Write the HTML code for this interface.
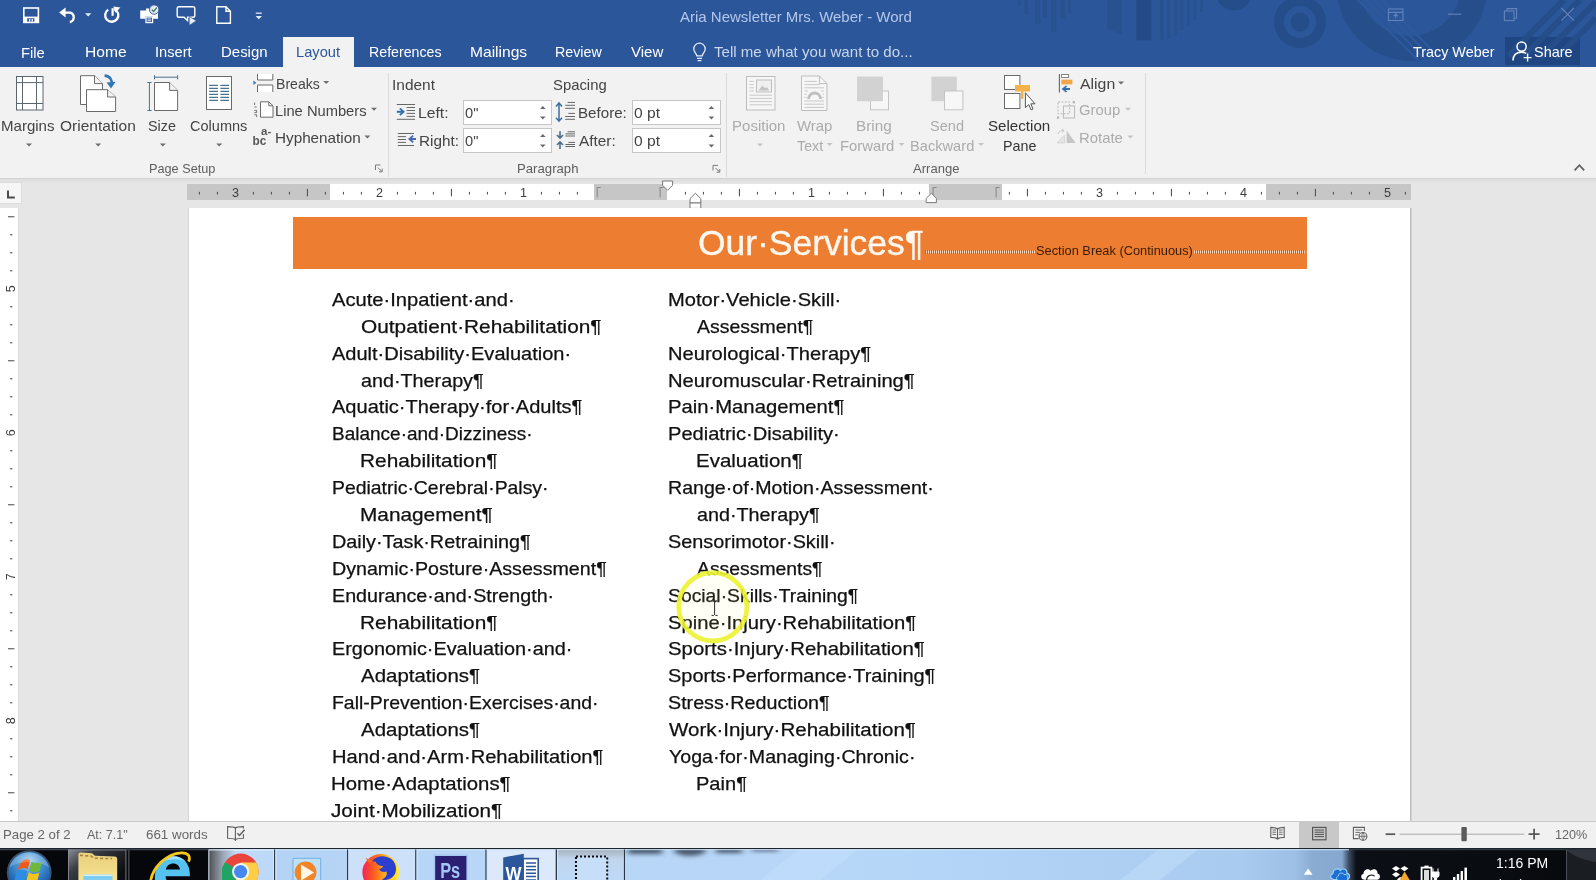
<!DOCTYPE html>
<html lang="en"><head><meta charset="utf-8"><title>Aria Newsletter Mrs. Weber - Word</title>
<style>
html,body{margin:0;padding:0;background:#e6e6e6;}
body{width:1596px;height:880px;overflow:hidden;font-family:"Liberation Sans",sans-serif;}
#root{position:relative;width:1596px;height:880px;overflow:hidden;background:#e6e6e6;}
.a{position:absolute;}
.t{position:absolute;white-space:pre;line-height:1;transform-origin:0 0;font-family:"Liberation Sans",sans-serif;}
svg{position:absolute;overflow:visible;will-change:transform;}

</style></head>
<body><div id="root">
<!-- bg.html -->
<div class="a" style="left:0;top:0;width:1596px;height:67px;background:#2b579a"></div>
<div class="a" style="left:0;top:67px;width:1596px;height:111px;background:#f2f2f2"></div>
<div class="a" style="left:0;top:178px;width:1596px;height:1px;background:#d2d2d2"></div>
<div class="a" style="left:0;top:179px;width:1596px;height:3px;background:#e0e0e0"></div>
<div class="a" style="left:283px;top:37px;width:71px;height:31px;background:#f2f2f2"></div>
<div class="a" style="left:1505px;top:37px;width:74.5px;height:28px;background:#1f4680"></div>

<!-- header.html -->
<svg style="left:0;top:0" width="1596" height="67" viewBox="0 0 1596 67">
<defs><clipPath id="hc"><rect x="0" y="0" width="1596" height="67"/></clipPath>
<clipPath id="ringc"><circle cx="1412" cy="-15" r="76"/></clipPath></defs>
<g clip-path="url(#hc)" fill="#244b87">
<!-- hanging stripes -->
<g fill="#28518f">
<rect x="1018" y="0" width="2.8" height="6"/><rect x="1024.4" y="0" width="3.6" height="15"/><rect x="1034.8" y="0" width="5.6" height="24"/>
<rect x="1043" y="0" width="4" height="18"/><rect x="1050.8" y="0" width="5.6" height="32"/><rect x="1060" y="0" width="5" height="19"/><rect x="1068" y="0" width="3" height="14"/>
<path d="M1107 0 H1122 V35 L1107 28 Z"/>
<rect x="1159.8" y="0" width="3.7" height="40"/><rect x="1167.3" y="0" width="2.8" height="38"/><rect x="1174" y="0" width="3.6" height="36"/>
<rect x="1180.5" y="0" width="2.8" height="31"/><rect x="1187" y="0" width="2.8" height="27"/><rect x="1193.6" y="0" width="2.8" height="20"/><rect x="1200" y="0" width="3" height="12"/>
</g>
<rect x="1136.3" y="0" width="15" height="40.4" fill="#244b88"/>
<!-- half disc -->
<circle cx="1234" cy="-8" r="18.4" fill="#254d89"/>
<!-- target ring -->
<circle cx="1300" cy="22" r="26" fill="#254d8a"/>
<circle cx="1300" cy="22" r="16" fill="#2b579a"/>
<circle cx="1300" cy="22" r="9.5" fill="#254d8a"/>
<!-- big ring -->
<circle cx="1412" cy="-15" r="76" fill="#264e8b"/>
<circle cx="1410" cy="-15" r="51" fill="#2b579a"/>
<g clip-path="url(#ringc)" stroke="#2d5a9e" stroke-width="2.2" fill="none">
<path d="M1348 -10 L1420 62"/><path d="M1356 -10 L1428 62"/><path d="M1364 -10 L1436 62"/><path d="M1372 -10 L1444 62"/>
</g>
<!-- right striped disc -->
<g stroke="#254d8a" stroke-width="6" fill="none">
<path d="M1596 2 L1540 58"/><path d="M1596 18 L1556 58"/><path d="M1580 0 L1524 56"/><path d="M1564 0 L1508 56"/>
</g>
</g>
<!-- QAT icons -->
<g fill="none" stroke="#ffffff" stroke-width="1.6">
<!-- save -->
<rect x="23.8" y="8" width="14.6" height="14.4"/>
<path d="M24 16.6 H38.2 V22 H24 Z" fill="#fff" stroke="none"/>
<rect x="27.2" y="18.3" width="7.2" height="3.3" fill="#2b579a" stroke="none"/>
<rect x="29" y="19" width="1.3" height="2.6" fill="#fff" stroke="none"/><rect x="31.6" y="19" width="1.3" height="2.6" fill="#fff" stroke="none"/>
<!-- undo -->
<path d="M62 12.6 H70.5 A5 5 0 0 1 70.5 22 H69.8" stroke-width="2.3"/>
<path d="M59.2 12.6 L65.6 7.6 V17.6 Z" fill="#fff" stroke="none"/>
<path d="M85 13.3 H91.4 L88.2 16.4 Z" fill="#e6ecf6" stroke="none"/>
<!-- redo -->
<path d="M114.6 9.2 A6.6 6.6 0 1 1 108.2 9.6" stroke-width="2.3"/>
<path d="M113.4 6.4 L120.4 7.6 L115.2 12.8 Z" fill="#fff" stroke="none"/>
<path d="M112.6 8.2 V15.8" stroke-width="2.2"/>
<!-- printer + check -->
<path d="M140.2 10.4 H146 V8.4 H149.5 V11 H158 V18.8 H153 V16.4 H145.4 V18.8 H140.2 Z" fill="#fff" stroke="none"/>
<rect x="146" y="17" width="6.6" height="5.6" fill="#2b579a" stroke="#fff" stroke-width="1.2"/>
<path d="M147.4 19 H151.2 M147.4 20.8 H151.2" stroke-width="0.9"/>
<circle cx="154.2" cy="9.6" r="4.7" fill="#dfe8f5" stroke="#2b579a" stroke-width="0.9"/>
<path d="M151.8 9.6 L153.6 11.5 L156.8 7.6" stroke="#3e7a52" stroke-width="1.3"/>
<!-- comment play -->
<path d="M179 6.8 H193 A1.8 1.8 0 0 1 194.8 8.6 V15.4 A1.8 1.8 0 0 1 193 17.2 H187.6 V20.6 L184 17.2 H179 A1.8 1.8 0 0 1 177.2 15.4 V8.6 A1.8 1.8 0 0 1 179 6.8 Z" stroke-width="1.4"/>
<path d="M189.2 16.4 L196.4 20.8 L189.2 25.4 Z" fill="#e8eef8" stroke="#2b579a" stroke-width="0.7"/>
<!-- new doc -->
<path d="M216.8 6.8 H226 L230.4 11.2 V23.2 H216.8 Z M226 6.8 V11.2 H230.4" stroke-width="1.4"/>
<!-- customize -->
<path d="M255.8 13.2 H261.8" stroke-width="1.3" stroke="#dfe7f3"/>
<path d="M255.6 16 H262 L258.8 19.2 Z" fill="#e6ecf6" stroke="none"/>
</g>
<!-- lightbulb -->
<g fill="none" stroke="#e4ebf7" stroke-width="1.3" transform="translate(0 1.3)">
<path d="M696.8 54.6 C696.8 52.2 693.8 51 693.8 47.6 A5.7 5.7 0 0 1 705.2 47.6 C705.2 51 702.2 52.2 702.2 54.6 Z"/>
<path d="M697 57 H702 M697.6 59.4 H701.4"/>
</g>
<!-- share person -->
<g fill="none" stroke="#ffffff" stroke-width="1.5">
<circle cx="1521.6" cy="46.6" r="4.6"/>
<path d="M1513 60.6 C1513 54.6 1517 52.2 1521.6 52.2 C1523.4 52.2 1525 52.6 1526.2 53.4"/>
<path d="M1527.6 53.6 V61.6 M1523.6 57.6 H1531.6" stroke-width="1.4"/>
</g>
<!-- window controls (faded) -->
<g fill="none" stroke="#6284ba" stroke-width="1.1">
<rect x="1388.5" y="9" width="14.5" height="11.5"/><path d="M1388.5 12.4 H1403 M1395.8 18.6 V14.2 M1393.6 16.2 L1395.8 14 L1398 16.2"/>
<path d="M1448 14.2 H1461.4"/>
<rect x="1504.4" y="11" width="9.6" height="9.6"/><path d="M1507 11 V8.6 H1516.6 V18.2 H1514"/>
<path d="M1561.4 8 L1574 20.6 M1574 8 L1561.4 20.6"/>
</g>
</svg>

<!-- ribbon.html -->
<!-- input boxes -->
<div class="a" style="left:462.5px;top:99.5px;width:89.5px;height:25.5px;background:#fff;box-sizing:border-box;border:1px solid #c6c6c6"></div>
<div class="a" style="left:462.5px;top:127.5px;width:89.5px;height:25.5px;background:#fff;box-sizing:border-box;border:1px solid #c6c6c6"></div>
<div class="a" style="left:631.5px;top:99.5px;width:89.5px;height:25.5px;background:#fff;box-sizing:border-box;border:1px solid #c6c6c6"></div>
<div class="a" style="left:631.5px;top:127.5px;width:89.5px;height:25.5px;background:#fff;box-sizing:border-box;border:1px solid #c6c6c6"></div>
<!-- group separators -->
<div class="a" style="left:387.5px;top:72.5px;width:1px;height:104px;background:#dadada"></div>
<div class="a" style="left:726px;top:72.5px;width:1px;height:104px;background:#dadada"></div>
<div class="a" style="left:1144.5px;top:72.5px;width:1px;height:101px;background:#dadada"></div>
<svg style="left:0;top:0" width="1596" height="180" viewBox="0 0 1596 180">
<!-- dropdown arrows -->
<g fill="#6e6e6e">
<path d="M26 143.4 h6 l-3 3z"/><path d="M95.2 143.4 h6 l-3 3z"/><path d="M159.8 143.4 h6 l-3 3z"/><path d="M216.2 143.4 h6 l-3 3z"/>
<path d="M323.2 81 h6 l-3 3z"/><path d="M371 107.8 h6 l-3 3z"/><path d="M364.4 135.6 h6 l-3 3z"/>
<path d="M1118 81.4 h6 l-3 3z"/>
</g>
<g fill="#c4c4c4">
<path d="M757 143.4 h6 l-3 3z"/><path d="M826.6 143 h6 l-3 3z"/><path d="M898.6 143 h6 l-3 3z"/><path d="M978 143 h6 l-3 3z"/>
<path d="M1125 107.8 h6 l-3 3z"/><path d="M1127.4 135.6 h6 l-3 3z"/>
</g>
<!-- spinner arrows -->
<g fill="#6a6a6a">
<path d="M540 109 l2.8 -3 l2.8 3z"/><path d="M540 116.4 l2.8 3 l2.8 -3z"/>
<path d="M540 137 l2.8 -3 l2.8 3z"/><path d="M540 144.4 l2.8 3 l2.8 -3z"/>
<path d="M708.6 109 l2.8 -3 l2.8 3z"/><path d="M708.6 116.4 l2.8 3 l2.8 -3z"/>
<path d="M708.6 137 l2.8 -3 l2.8 3z"/><path d="M708.6 144.4 l2.8 3 l2.8 -3z"/>
</g>
<!-- dialog launchers -->
<g fill="none" stroke="#7a7a7a" stroke-width="1">
<path d="M375.5 170 V165 H380.5"/><path d="M378 167.6 L382 171.6 M382.2 168.6 V171.8 H379"/>
<path d="M713 170.4 V165.4 H718"/><path d="M715.6 168 L719.6 172 M719.8 169 V172.2 H716.6"/>
</g>
<!-- collapse caret -->
<path d="M1574.6 170.4 L1579.4 165.2 L1584.2 170.4" fill="none" stroke="#5f5f5f" stroke-width="1.7"/>

<!-- Margins -->
<g fill="none" stroke="#5b6670" stroke-width="1">
<rect x="16.5" y="76.5" width="26.5" height="33.5" fill="#fff"/>
<path d="M22.5 76.5 V110 M36.5 76.5 V110 M16.5 82.6 H43 M16.5 103.5 H43"/>
</g>
<!-- Orientation -->
<g fill="#fff" stroke="#6a6a6a" stroke-width="1">
<path d="M80.5 75.7 H94.5 L102.5 83.6 V104.5 H80.5 Z"/><path d="M94.5 75.7 V83.6 H102.5" fill="#f4f4f4"/>
<path d="M86.5 89.7 H107.6 L115.6 97 V111.5 H86.5 Z"/><path d="M107.6 89.7 V97 H115.6" fill="#f4f4f4"/>
</g>
<path d="M104.6 75.6 C110 76 112.4 80 111.6 85" fill="none" stroke="#2f77b5" stroke-width="2.6"/>
<path d="M106.6 82.6 L111 88.4 L115.6 81.8 Z" fill="#2f77b5"/>
<!-- Size -->
<g fill="#fff" stroke="#6a6a6a" stroke-width="1">
<path d="M154.5 82.5 H169.6 L177.6 90.4 V110.5 H154.5 Z"/><path d="M169.6 82.5 V90.4 H177.6" fill="#f4f4f4"/>
</g>
<path d="M154.5 77.2 H177.6 M154.5 75.2 V79.4 M177.6 75.2 V79.4 M149.4 82.5 V110.5 M147.4 82.5 H151.6 M147.4 110.5 H151.6" fill="none" stroke="#49708f" stroke-width="1"/>
<!-- Columns -->
<rect x="206.5" y="76.5" width="25" height="33" fill="#fff" stroke="#6a6a6a" stroke-width="1"/>
<path d="M209.2 85.4 H218 M209.2 88.4 H218 M209.2 91.4 H218 M209.2 94.4 H218 M209.2 97.4 H218 M209.2 100.4 H218 M220.4 85.4 H229 M220.4 88.4 H229 M220.4 91.4 H229 M220.4 94.4 H229 M220.4 97.4 H229 M220.4 100.4 H229" fill="none" stroke="#47738f" stroke-width="1.1"/>
<!-- Breaks -->
<path d="M257.5 74 V80 H272.8 V74 M257.5 92 V85 H272.8 V92" fill="#fff" stroke="#6a6a6a" stroke-width="1"/>
<path d="M253.4 80.4 L256.4 82.7 L253.4 85 Z" fill="#3d7ab8"/>
<!-- Line numbers -->
<path d="M260.5 101.8 H268.8 L273 105.8 V117.2 H260.5 Z" fill="#fff" stroke="#6a6a6a" stroke-width="1"/><path d="M268.8 101.8 V105.8 H273" fill="none" stroke="#6a6a6a" stroke-width="1"/>
<path d="M254.6 102.6 V105 M254.4 107 H256.6 M254.4 110.4 H256.6 V112.6 H254.4 M254.4 114.8 H256.6 V117" fill="none" stroke="#666" stroke-width="0.9"/>
<!-- Hyphenation -->
<text x="261" y="135.2" font-size="11.5" font-weight="bold" fill="#595959" font-family="Liberation Sans, sans-serif">a-</text>
<text x="252.6" y="144.6" font-size="12.6" font-weight="bold" fill="#595959" font-family="Liberation Sans, sans-serif" textLength="13.8" lengthAdjust="spacingAndGlyphs">bc</text>
<!-- Indent left -->
<path d="M396.8 104.5 H415 M396.8 119.3 H415 M406.6 107.5 H415 M406.6 110.5 H415 M406.6 113.4 H415 M406.6 116.4 H415" fill="none" stroke="#666" stroke-width="1"/>
<path d="M396.8 111.8 H402.6" fill="none" stroke="#2f6fb0" stroke-width="2"/><path d="M400.4 107.8 L405 111.8 L400.4 115.8 L399.2 114.6 L402.2 111.8 L399.2 109 Z" fill="#2f6fb0"/>
<!-- Indent right -->
<path d="M397.8 133.5 H414 M397.8 145.5 H414 M397.8 136.6 H406 M397.8 139.5 H406 M397.8 142.4 H406" fill="none" stroke="#666" stroke-width="1"/>
<path d="M416 139 H410.4" fill="none" stroke="#4668ad" stroke-width="2"/><path d="M412.6 135 L408 139 L412.6 143 L413.8 141.8 L410.8 139 L413.8 136.2 Z" fill="#4668ad"/>
<!-- Spacing before -->
<path d="M559 103.4 V120.6 M556 106.4 L559 103 L562 106.4 M556 117.8 L559 121.2 L562 117.8" fill="none" stroke="#3d6f9e" stroke-width="1.5"/>
<path d="M567.6 102.4 H575 M565.2 105.3 H575 M565.2 108.3 H575 M568.4 113.4 H575 M565.2 116.5 H575 M565.2 119.3 H575" fill="none" stroke="#666" stroke-width="1"/>
<!-- Spacing after -->
<path d="M560 131.2 V137.6 M557 135 L560 138.2 L563 135 M560 149 V142.6 M557 145 L560 141.8 L563 145" fill="none" stroke="#4a6c8c" stroke-width="1.6"/>
<path d="M567.6 131.8 H575 M565.4 133.9 H575 M565.4 136 H575 M568.4 142.4 H575 M565.4 144.5 H575 M565.4 146.5 H575" fill="none" stroke="#666" stroke-width="1"/>

<!-- Position (disabled) -->
<g fill="none" stroke="#bdbdbd" stroke-width="1">
<rect x="746.5" y="76.5" width="28.5" height="33.5" fill="#f6f6f6"/>
<rect x="756.5" y="80" width="15" height="12" fill="#f0f0f0"/>
<path d="M758.6 90.4 L762.4 85.6 L765 88.4 L766.6 87 L769.4 90.4 Z" fill="#c2c2c2" stroke="none"/>
<path d="M749.4 81.4 H754 M749.4 84.6 H754 M749.4 87.8 H754 M749.4 91 H754 M749.4 95.2 H772 M749.4 98.4 H772 M749.4 101.6 H772 M749.4 104.8 H772" stroke="#c9c9c9"/>
</g>
<!-- Wrap text (disabled) -->
<g fill="none" stroke="#bdbdbd" stroke-width="1">
<path d="M801.5 76 H819.4 L827 83.6 V110.5 H801.5 Z" fill="#f6f6f6"/><path d="M819.4 76 V83.6 H827"/>
<path d="M804.4 81.4 H817 M804.4 84.6 H820 M804.4 87.8 H824 M804.4 91 H808 M821 91 H824 M804.4 94.2 H806.6 M822.4 94.2 H824 M804.4 97.4 H806.6 M822.4 97.4 H824 M804.4 101 H824 M804.4 104.2 H824 M804.4 107.4 H824" stroke="#c9c9c9"/>
<path d="M808.6 99 A6 6 0 0 1 820.6 99" stroke="#c0c0c0" stroke-width="2.8"/>
</g>
<!-- Bring forward (disabled) -->
<rect x="870.5" y="91" width="18" height="18.8" fill="#f7f7f7" stroke="#c4c4c4" stroke-width="1"/>
<rect x="857" y="76.6" width="26" height="24.6" fill="#d2d2d2"/>
<!-- Send backward (disabled) -->
<rect x="931.4" y="76.6" width="25.4" height="24.6" fill="#d2d2d2"/>
<rect x="944.5" y="91" width="18.4" height="18.8" fill="#f7f7f7" stroke="#c4c4c4" stroke-width="1"/>
<!-- Selection pane -->
<rect x="1004.5" y="75.5" width="15.4" height="14" fill="#fff" stroke="#6a6a6a" stroke-width="1"/>
<rect x="1004.5" y="93.5" width="15.4" height="15" fill="#fff" stroke="#6a6a6a" stroke-width="1"/>
<path d="M1015 85 H1030 V91.6 H1023.4 V99 H1021 V91.6 H1015 Z" fill="#f2b34a"/>
<path d="M1025.4 92.8 V107.6 L1028.8 104.6 L1031 109.8 L1033 109 L1030.8 103.8 H1035 Z" fill="#fff" stroke="#555" stroke-width="1"/>
<!-- Align -->
<path d="M1059.4 74 V92.4" stroke="#666" stroke-width="1.1" fill="none"/>
<rect x="1061.6" y="74.5" width="7" height="3" fill="#fff" stroke="#777" stroke-width="0.9"/>
<rect x="1061.4" y="79.6" width="11" height="4.8" fill="#f0a84a"/>
<path d="M1070 89 H1064" fill="none" stroke="#2f6fb0" stroke-width="2"/><path d="M1066 85.4 L1061.6 89 L1066 92.6 L1067.2 91.4 L1064.4 89 L1067.2 86.6 Z" fill="#2f6fb0"/>
<!-- Group (disabled) -->
<g fill="none" stroke="#b8b8b8" stroke-width="1">
<rect x="1058" y="102" width="11.6" height="11.8" stroke-dasharray="2 1.4"/>
<rect x="1063.4" y="106" width="11.2" height="12" />
<rect x="1072.6" y="101" width="2.4" height="2.4" fill="#b8b8b8" stroke="none"/><rect x="1056.8" y="116.4" width="2.4" height="2.4" fill="#b8b8b8" stroke="none"/>
</g>
<!-- Rotate (disabled) -->
<path d="M1066.6 143 V130.6 L1075.6 143 Z" fill="#c6c6c6"/>
<path d="M1057 143 H1064.6 V135 Z" fill="#e4e4e4" stroke="#cfcfcf" stroke-width="0.8"/>
<path d="M1058 134 C1059 131 1061 130.4 1063.6 130.6 M1062 128.8 L1064.2 130.7 L1062 132.6" fill="none" stroke="#c6c6c6" stroke-width="1"/>
</svg>

<!-- ruler.html -->
<div class="a" style="left:187.0px;top:184.0px;width:1224.2px;height:16.0px;background:#ffffff;"></div>
<div class="a" style="left:187.0px;top:184.0px;width:143.4px;height:16.0px;background:#c6c6c6;"></div>
<div class="a" style="left:593.8px;top:184.0px;width:73.3px;height:16.0px;background:#c6c6c6;"></div>
<div class="a" style="left:929.2px;top:184.0px;width:73.0px;height:16.0px;background:#c6c6c6;"></div>
<div class="a" style="left:1265.9px;top:184.0px;width:145.3px;height:16.0px;background:#c6c6c6;"></div>
<svg style="left:0;top:0" width="1596" height="220" viewBox="0 0 1596 220">
<rect x="198.9" y="191.9" width="1.1" height="2.6" fill="#555"/>
<rect x="216.9" y="191.9" width="1.1" height="2.6" fill="#555"/>
<text x="235.4" y="197.1" font-size="12.6" fill="#3c3c3c" text-anchor="middle" font-family="Liberation Sans, sans-serif">3</text>
<rect x="252.9" y="191.9" width="1.1" height="2.6" fill="#555"/>
<rect x="270.9" y="191.9" width="1.1" height="2.6" fill="#555"/>
<rect x="288.9" y="191.9" width="1.1" height="2.6" fill="#555"/>
<rect x="306.9" y="188.9" width="1.1" height="7.4" fill="#555"/>
<rect x="324.9" y="191.9" width="1.1" height="2.6" fill="#555"/>
<rect x="342.9" y="191.9" width="1.1" height="2.6" fill="#555"/>
<rect x="360.9" y="191.9" width="1.1" height="2.6" fill="#555"/>
<text x="379.4" y="197.1" font-size="12.6" fill="#3c3c3c" text-anchor="middle" font-family="Liberation Sans, sans-serif">2</text>
<rect x="396.9" y="191.9" width="1.1" height="2.6" fill="#555"/>
<rect x="414.9" y="191.9" width="1.1" height="2.6" fill="#555"/>
<rect x="432.9" y="191.9" width="1.1" height="2.6" fill="#555"/>
<rect x="450.9" y="188.9" width="1.1" height="7.4" fill="#555"/>
<rect x="468.9" y="191.9" width="1.1" height="2.6" fill="#555"/>
<rect x="486.9" y="191.9" width="1.1" height="2.6" fill="#555"/>
<rect x="504.9" y="191.9" width="1.1" height="2.6" fill="#555"/>
<text x="523.4" y="197.1" font-size="12.6" fill="#3c3c3c" text-anchor="middle" font-family="Liberation Sans, sans-serif">1</text>
<rect x="540.9" y="191.9" width="1.1" height="2.6" fill="#555"/>
<rect x="558.9" y="191.9" width="1.1" height="2.6" fill="#555"/>
<rect x="576.9" y="191.9" width="1.1" height="2.6" fill="#555"/>
<rect x="684.9" y="191.9" width="1.1" height="2.6" fill="#555"/>
<rect x="702.9" y="191.9" width="1.1" height="2.6" fill="#555"/>
<rect x="720.9" y="191.9" width="1.1" height="2.6" fill="#555"/>
<rect x="738.9" y="188.9" width="1.1" height="7.4" fill="#555"/>
<rect x="756.9" y="191.9" width="1.1" height="2.6" fill="#555"/>
<rect x="774.9" y="191.9" width="1.1" height="2.6" fill="#555"/>
<rect x="792.9" y="191.9" width="1.1" height="2.6" fill="#555"/>
<text x="811.4" y="197.1" font-size="12.6" fill="#3c3c3c" text-anchor="middle" font-family="Liberation Sans, sans-serif">1</text>
<rect x="828.9" y="191.9" width="1.1" height="2.6" fill="#555"/>
<rect x="846.9" y="191.9" width="1.1" height="2.6" fill="#555"/>
<rect x="864.9" y="191.9" width="1.1" height="2.6" fill="#555"/>
<rect x="882.9" y="188.9" width="1.1" height="7.4" fill="#555"/>
<rect x="900.9" y="191.9" width="1.1" height="2.6" fill="#555"/>
<rect x="918.9" y="191.9" width="1.1" height="2.6" fill="#555"/>
<rect x="1008.9" y="191.9" width="1.1" height="2.6" fill="#555"/>
<rect x="1026.9" y="188.9" width="1.1" height="7.4" fill="#555"/>
<rect x="1044.9" y="191.9" width="1.1" height="2.6" fill="#555"/>
<rect x="1062.9" y="191.9" width="1.1" height="2.6" fill="#555"/>
<rect x="1080.9" y="191.9" width="1.1" height="2.6" fill="#555"/>
<text x="1099.4" y="197.1" font-size="12.6" fill="#3c3c3c" text-anchor="middle" font-family="Liberation Sans, sans-serif">3</text>
<rect x="1116.9" y="191.9" width="1.1" height="2.6" fill="#555"/>
<rect x="1134.9" y="191.9" width="1.1" height="2.6" fill="#555"/>
<rect x="1152.9" y="191.9" width="1.1" height="2.6" fill="#555"/>
<rect x="1170.9" y="188.9" width="1.1" height="7.4" fill="#555"/>
<rect x="1188.9" y="191.9" width="1.1" height="2.6" fill="#555"/>
<rect x="1206.9" y="191.9" width="1.1" height="2.6" fill="#555"/>
<rect x="1224.9" y="191.9" width="1.1" height="2.6" fill="#555"/>
<text x="1243.4" y="197.1" font-size="12.6" fill="#3c3c3c" text-anchor="middle" font-family="Liberation Sans, sans-serif">4</text>
<rect x="1260.9" y="191.9" width="1.1" height="2.6" fill="#555"/>
<rect x="1278.9" y="191.9" width="1.1" height="2.6" fill="#555"/>
<rect x="1296.9" y="191.9" width="1.1" height="2.6" fill="#555"/>
<rect x="1314.9" y="188.9" width="1.1" height="7.4" fill="#555"/>
<rect x="1332.9" y="191.9" width="1.1" height="2.6" fill="#555"/>
<rect x="1350.9" y="191.9" width="1.1" height="2.6" fill="#555"/>
<rect x="1368.9" y="191.9" width="1.1" height="2.6" fill="#555"/>
<text x="1387.4" y="197.1" font-size="12.6" fill="#3c3c3c" text-anchor="middle" font-family="Liberation Sans, sans-serif">5</text>
<rect x="1404.9" y="191.9" width="1.1" height="2.6" fill="#555"/>
<path d="M597.2 197.5 V187.5 H600.7" fill="none" stroke="#8a8a8a" stroke-width="1.1"/>
<path d="M660.1 197.5 V187.5 H663.6" fill="none" stroke="#8a8a8a" stroke-width="1.1"/>
<path d="M933.1 197.5 V187.5 H936.6" fill="none" stroke="#8a8a8a" stroke-width="1.1"/>
<path d="M996.1 197.5 V187.5 H999.6" fill="none" stroke="#8a8a8a" stroke-width="1.1"/>
<path d="M662.6 181 H672.6 V185.3 L667.6 190.3 L662.6 185.3 Z" fill="#fdfdfd" stroke="#7a7a7a" stroke-width="1"/>
<path d="M690 198.6 L695.4 193.3 L700.8 198.6 V203 H690 Z" fill="#fdfdfd" stroke="#7a7a7a" stroke-width="1"/>
<rect x="690" y="203" width="10.8" height="5.4" fill="#fdfdfd" stroke="#7a7a7a" stroke-width="1"/>
<path d="M926.2 198.4 L931.3 193.3 L936.4 198.4 V202.6 H926.2 Z" fill="#fdfdfd" stroke="#7a7a7a" stroke-width="1"/>
</svg>
<div class="a" style="left:0.0px;top:183.0px;width:21.0px;height:20.0px;background:#f6f6f6;box-shadow:0 0 0 1px #dcdcdc;"></div>
<svg style="left:0;top:0" width="30" height="220" viewBox="0 0 30 220"><path d="M8 190.6 V197.6 H14.8" fill="none" stroke="#4a4a4a" stroke-width="2"/></svg>
<div class="a" style="left:0.0px;top:207.5px;width:17.6px;height:614.0px;background:#ffffff;"></div>
<div class="a" style="left:17.6px;top:207.5px;width:1.0px;height:614.0px;background:#dddddd;"></div>
<svg style="left:0;top:0" width="30" height="880" viewBox="0 0 30 880">
<rect x="8" y="216.2" width="6.4" height="1.1" fill="#555"/>
<rect x="10" y="234.2" width="2.4" height="1.1" fill="#555"/>
<rect x="10" y="252.2" width="2.4" height="1.1" fill="#555"/>
<rect x="10" y="270.2" width="2.4" height="1.1" fill="#555"/>
<text transform="translate(15.4 288.7) rotate(-90)" font-size="12.6" fill="#3c3c3c" text-anchor="middle" font-family="Liberation Sans, sans-serif">5</text>
<rect x="10" y="306.2" width="2.4" height="1.1" fill="#555"/>
<rect x="10" y="324.2" width="2.4" height="1.1" fill="#555"/>
<rect x="10" y="342.2" width="2.4" height="1.1" fill="#555"/>
<rect x="8" y="360.2" width="6.4" height="1.1" fill="#555"/>
<rect x="10" y="378.2" width="2.4" height="1.1" fill="#555"/>
<rect x="10" y="396.2" width="2.4" height="1.1" fill="#555"/>
<rect x="10" y="414.2" width="2.4" height="1.1" fill="#555"/>
<text transform="translate(15.4 432.7) rotate(-90)" font-size="12.6" fill="#3c3c3c" text-anchor="middle" font-family="Liberation Sans, sans-serif">6</text>
<rect x="10" y="450.2" width="2.4" height="1.1" fill="#555"/>
<rect x="10" y="468.2" width="2.4" height="1.1" fill="#555"/>
<rect x="10" y="486.2" width="2.4" height="1.1" fill="#555"/>
<rect x="8" y="504.2" width="6.4" height="1.1" fill="#555"/>
<rect x="10" y="522.2" width="2.4" height="1.1" fill="#555"/>
<rect x="10" y="540.2" width="2.4" height="1.1" fill="#555"/>
<rect x="10" y="558.2" width="2.4" height="1.1" fill="#555"/>
<text transform="translate(15.4 576.7) rotate(-90)" font-size="12.6" fill="#3c3c3c" text-anchor="middle" font-family="Liberation Sans, sans-serif">7</text>
<rect x="10" y="594.2" width="2.4" height="1.1" fill="#555"/>
<rect x="10" y="612.2" width="2.4" height="1.1" fill="#555"/>
<rect x="10" y="630.2" width="2.4" height="1.1" fill="#555"/>
<rect x="8" y="648.2" width="6.4" height="1.1" fill="#555"/>
<rect x="10" y="666.2" width="2.4" height="1.1" fill="#555"/>
<rect x="10" y="684.2" width="2.4" height="1.1" fill="#555"/>
<rect x="10" y="702.2" width="2.4" height="1.1" fill="#555"/>
<text transform="translate(15.4 720.7) rotate(-90)" font-size="12.6" fill="#3c3c3c" text-anchor="middle" font-family="Liberation Sans, sans-serif">8</text>
<rect x="10" y="738.2" width="2.4" height="1.1" fill="#555"/>
<rect x="10" y="756.2" width="2.4" height="1.1" fill="#555"/>
<rect x="10" y="774.2" width="2.4" height="1.1" fill="#555"/>
<rect x="8" y="792.2" width="6.4" height="1.1" fill="#555"/>
<rect x="10" y="810.2" width="2.4" height="1.1" fill="#555"/>
</svg>
<!-- doc.html -->
<div class="a" style="left:188.4px;top:208.4px;width:1223.2px;height:614px;background:#d4d4d4"></div>
<div class="a" style="left:1410.2px;top:208.4px;width:1.3px;height:614px;background:#bdbdbd"></div>
<div class="a" style="left:189px;top:208.4px;width:1221px;height:613.6px;background:#ffffff"></div>
<div class="a" style="left:292.5px;top:216.7px;width:1014.3px;height:52px;background:#ec7d31"></div>
<svg style="left:0;top:0" width="1596" height="300" viewBox="0 0 1596 300">
<defs><pattern id="dots" x="925" y="250" width="2" height="4" patternUnits="userSpaceOnUse">
<rect x="0" y="0.5" width="2" height="3" fill="#f8e2cf"/>
<rect x="0" y="0.5" width="1" height="1.1" fill="#2e2118"/><rect x="0" y="2.4" width="1" height="1.1" fill="#2e2118"/>
</pattern></defs>
<rect x="925" y="250" width="110.6" height="4" fill="url(#dots)" opacity="0.9"/>
<rect x="1194" y="250" width="110.8" height="4" fill="url(#dots)" opacity="0.9"/>
</svg>

<!-- status.html -->
<div class="a" style="left:0;top:821px;width:1596px;height:1px;background:#c9c9c9"></div>
<div class="a" style="left:0;top:822px;width:1596px;height:26px;background:#f1f1f1"></div>
<div class="a" style="left:1299.4px;top:822px;width:40.1px;height:26px;background:#c8c8c8"></div>
<svg style="left:0;top:0" width="1596" height="880" viewBox="0 0 1596 880">
<g fill="none" stroke="#5f5f5f" stroke-width="1.1">
<!-- proofing book -->
<path d="M235.4 828 C233.6 826.6 231.4 826.6 227.6 826.6 V838.2 C231.4 838.2 233.6 838.2 235.4 839.6 C237.2 838.2 239.4 838.2 243.4 838.2 V834 M235.4 828 C237.2 826.6 239.4 826.6 243.4 826.6 V828.4 M235.4 828 V841"/>
<path d="M237.4 833.2 L239.5 835.4 L244.6 829.8" stroke-width="1.5"/>
<!-- read mode -->
<path d="M1277.5 829 C1275.6 827.4 1273.6 827.4 1270.8 827.4 V837.4 C1273.6 837.4 1275.6 837.4 1277.5 839 C1279.4 837.4 1281.4 837.4 1284.2 837.4 V827.4 C1281.4 827.4 1279.4 827.4 1277.5 829 Z M1277.5 829 V839"/>
<path d="M1272.4 830 H1276 M1272.4 832.2 H1276 M1272.4 834.4 H1276 M1279 830 H1282.6 M1279 832.2 H1282.6 M1279 834.4 H1282.6" stroke-width="0.9"/>
<!-- print layout -->
<rect x="1312.6" y="827.4" width="13.4" height="12.4" stroke="#4f4f4f"/>
<path d="M1314.6 830 H1324 M1314.6 832.2 H1324 M1314.6 834.4 H1324 M1314.6 836.6 H1324" stroke="#4f4f4f" stroke-width="1"/>
<!-- web layout -->
<path d="M1364.4 831 V827.4 H1353.4 V838.6 H1358.6"/>
<path d="M1355.4 830 H1362.4 M1355.4 832.4 H1360 M1355.4 834.8 H1358.6" stroke-width="0.9"/>
<circle cx="1363" cy="836.4" r="3.9" fill="#f1f1f1"/>
<path d="M1359.2 836.4 H1366.8 M1363 832.6 C1361.4 834.6 1361.4 838.2 1363 840.2 M1363 832.6 C1364.6 834.6 1364.6 838.2 1363 840.2" stroke-width="0.8"/>
</g>
<!-- zoom slider -->
<path d="M1385.6 834.2 H1395.2" stroke="#5a5a5a" stroke-width="1.8"/>
<path d="M1399.6 834.2 H1524.2" stroke="#a8a8a8" stroke-width="1"/>
<rect x="1461.4" y="827" width="5.4" height="14.2" rx="1" fill="#5a5a5a"/>
<path d="M1528.6 834.2 H1539.6 M1534.1 828.8 V839.6" stroke="#5a5a5a" stroke-width="1.8"/>
</svg>

<!-- taskbar.html -->
<div class="a" style="left:0;top:848px;width:1596px;height:32px;background:linear-gradient(90deg,#05070a 0,#05070a 208px,#b3d1f3 209px,#b9d7f7 520px,#b6d6f8 900px,#a9cbef 1240px,#9dbfe6 1296px,#8aabd2 1312px,#86a7cf 1342px,#3a4a60 1349px,#0c1016 1356px,#07090c 1596px)"></div>
<svg style="left:0;top:848px" width="1596" height="32" viewBox="0 848 1596 32">
<defs>
<linearGradient id="gExp" x1="0" y1="0" x2="1" y2="0.6"><stop offset="0" stop-color="#8a8d94"/><stop offset="0.35" stop-color="#3a3d44"/><stop offset="1" stop-color="#0c0e12"/></linearGradient>
<linearGradient id="gChr" x1="0" y1="0" x2="1" y2="0"><stop offset="0" stop-color="#4a4c50"/><stop offset="0.22" stop-color="#9aa6b4"/><stop offset="0.42" stop-color="#c2dcf8"/><stop offset="1" stop-color="#bcd8f8"/></linearGradient>
<radialGradient id="gOrb" cx="0.5" cy="0.25" r="0.9"><stop offset="0" stop-color="#a8d2ee"/><stop offset="0.3" stop-color="#4c98d6"/><stop offset="0.7" stop-color="#1a5fb2"/><stop offset="1" stop-color="#0b3878"/></radialGradient>
<linearGradient id="gFold" x1="0" y1="0" x2="0" y2="1"><stop offset="0" stop-color="#e8cf7c"/><stop offset="1" stop-color="#f6e391"/></linearGradient>
<linearGradient id="gFx" x1="0" y1="0" x2="1" y2="0"><stop offset="0" stop-color="#f0245a"/><stop offset="0.3" stop-color="#ff5a1e"/><stop offset="0.62" stop-color="#ffb01e"/><stop offset="1" stop-color="#fff03c"/></linearGradient>
<linearGradient id="gSnip" x1="0" y1="0" x2="0" y2="1"><stop offset="0" stop-color="#a9b3be"/><stop offset="0.3" stop-color="#c0d6ee"/><stop offset="1" stop-color="#bcd9f8"/></linearGradient>
<filter id="blur3" x="-10%" y="-100%" width="120%" height="300%"><feGaussianBlur stdDeviation="3 2"/></filter>
<clipPath id="tbc"><rect x="0" y="848" width="1596" height="32"/></clipPath>
</defs>
<g clip-path="url(#tbc)">
<!-- diagonal glass streaks -->
<path d="M760 880 L800 848 H860 L820 880 Z M1120 880 L1160 848 H1200 L1160 880 Z" fill="#c4e0fb" opacity="0.5"/>
<!-- blurred window text behind glass -->
<g filter="url(#blur3)" fill="#3c4c5e" opacity="0.9">
<rect x="628" y="846" width="34" height="8"/><ellipse cx="690" cy="850" rx="16" ry="6"/><rect x="716" y="846" width="26" height="7"/><rect x="752" y="846" width="26" height="5"/>
</g>
<!-- top edge -->
<rect x="0" y="848" width="1596" height="1.2" fill="#1c242e"/>
<rect x="0" y="849.2" width="208" height="1" fill="#4c535c"/>
<rect x="209" y="849.2" width="1140" height="1" fill="#d6e8fb"/>
<rect x="1349" y="849.2" width="247" height="1" fill="#39414a"/>

<!-- start orb -->
<circle cx="29.2" cy="872.6" r="22.4" fill="#39536e"/>
<circle cx="29.2" cy="872.6" r="20.6" fill="url(#gOrb)"/>
<path d="M19 866 C22.6 858.8 27 858.4 30.2 860.4 L27.6 869.2 C24.4 867.4 21.6 867.6 17.4 870.4 Z" fill="#ee5a1c"/>
<path d="M31.6 861.4 C34.8 863.6 38 863.8 41.8 861.6 L39.8 871 C36 873 32.6 872.6 29.2 870.4 Z" fill="#6fb83c"/>
<path d="M16.8 872 C20.6 869.4 24 869.4 27.2 871.2 L24.6 880.5 L14.4 880.5 Z" fill="#2d8de2"/>
<path d="M28.8 872.2 C32 874.4 35.6 874.6 39.4 872.6 L37.4 880.5 H26.4 Z" fill="#f4c41c"/>
<path d="M9 868 A21 21 0 0 1 49.4 868 C40 860 18 860 9 868 Z" fill="#ffffff" opacity="0.22"/>

<!-- explorer button -->
<rect x="68" y="849.5" width="58.4" height="31" fill="url(#gExp)"/>
<rect x="68.5" y="850" width="57.4" height="31" fill="none" stroke="#8e9299" stroke-width="1" opacity="0.8"/>
<path d="M78.4 854.6 Q78.4 852.6 80.4 852.6 L92 853.2 L95 855.8 L114.6 856.4 Q117.2 856.4 117.2 859 V881 H78.4 Z" fill="url(#gFold)"/>
<path d="M80 855.4 L91 856 L94 858.2 L112 858.6" fill="none" stroke="#8a6a2a" stroke-width="1.6" stroke-dasharray="3 2.2" opacity="0.75"/>
<rect x="83.4" y="874.6" width="29" height="6" fill="#7ccdf0"/><rect x="83.4" y="874.6" width="29" height="1.4" fill="#d8f1fb"/>
<rect x="128" y="849.5" width="1.6" height="31" fill="#3c4148"/>

<!-- IE -->
<path d="M155 881 C153.4 867 161.6 856.4 173.4 856.2 C184.4 856 190.6 865 189.8 876.2 H165.6 C165.8 878.6 166.4 880 167.4 881 Z M165.8 869.6 H180 C179.4 865.8 177 863.6 173.2 863.6 C169.4 863.6 166.8 865.8 165.8 869.6 Z" fill="#56c2f0" fill-rule="evenodd"/>
<path d="M160 862 C164 857.6 169 856.2 173.4 856.2 C178 856.2 182 857.8 185 861 C180 858.6 170 858.4 160 862 Z" fill="#9fe2fa"/>
<path d="M150.6 881 C152.6 868 166 853.6 181.4 852.8 C188.2 852.6 190.8 856.4 188.6 861.6" fill="none" stroke="#f6c81e" stroke-width="2.8"/>
<!-- chrome button -->
<rect x="208.4" y="849.5" width="65.8" height="31" fill="url(#gChr)"/>
<rect x="208.9" y="850" width="64.8" height="31" fill="none" stroke="#e8f2fd" stroke-width="1" opacity="0.85"/>
<circle cx="240.6" cy="871.6" r="18" fill="#e9453c"/>
<path d="M240.6 871.6 L225 862.6 A18 18 0 0 0 231.6 887.2 Z" fill="#1fa463"/>
<path d="M240.6 871.6 L231.6 887.2 A18 18 0 0 0 256.2 862.6 H240.6 Z" fill="#ffce44"/>
<path d="M240.6 871.6 L225 862.6 L222 868 L222 880.5 H232 Z" fill="#1fa463"/>
<circle cx="240.6" cy="871.6" r="8.6" fill="#f4f8fc"/>
<circle cx="240.6" cy="871.6" r="6.6" fill="#4688f0"/>

<!-- button separators -->
<g fill="#2a3644"><rect x="274" y="849.5" width="1.2" height="31"/><rect x="347" y="849.5" width="1.2" height="31"/><rect x="415.2" y="849.5" width="1.2" height="31"/><rect x="485.4" y="849.5" width="1.2" height="31"/><rect x="555.6" y="849.5" width="1.4" height="31"/><rect x="623.8" y="849.5" width="1.2" height="31"/></g>
<g fill="#e2eefc" opacity="0.8"><rect x="275.4" y="849.5" width="1" height="31"/><rect x="348.4" y="849.5" width="1" height="31"/><rect x="416.6" y="849.5" width="1" height="31"/><rect x="486.8" y="849.5" width="1" height="31"/><rect x="557.2" y="849.5" width="1" height="31"/></g>
<!-- firefox & word buttons lighter -->
<rect x="349.4" y="850.2" width="65.6" height="30" fill="#d4e4fa" opacity="0.75"/>
<rect x="487.8" y="850.2" width="67.6" height="30" fill="#e2ecfb" opacity="0.85"/>
<rect x="558.2" y="850.2" width="65.4" height="30" fill="url(#gSnip)"/>

<!-- media player -->
<rect x="293" y="858.4" width="27.6" height="24" fill="#bfe0fa" stroke="#7db8e6" stroke-width="1.2"/>
<circle cx="305.6" cy="872.6" r="11" fill="#f0862a"/>
<path d="M301 864.6 L314 872.6 L301 880.6 Z" fill="#fff6e6"/>

<!-- firefox -->
<circle cx="380.8" cy="872.4" r="18.4" fill="url(#gFx)"/>
<path d="M372 861 C376 855.6 385 854.6 391 858.8 C396 862.4 397.4 869.4 394.6 874.6 C392 879.4 386 881 382 879.4 C386 877.6 387.6 874.4 386.4 871.6 C383.6 872.6 380 871.6 378.8 869 C381 869 382.6 867.8 383 866 C379.6 866.4 376.6 864.6 375.6 861.8 C374.4 861.8 373 861.6 372 861 Z" fill="#2a3fd0"/>
<path d="M365.4 858 L369.6 863.6 L372.6 860.6 Z" fill="#ff6a1e"/>

<!-- photoshop -->
<rect x="433.6" y="854.4" width="34.4" height="28" fill="#a9c6f2"/>
<rect x="435.2" y="856" width="31.2" height="26" fill="#2a1f70"/>
<text x="440.2" y="877.6" font-size="21.5" font-weight="bold" fill="#a3c6f6" font-family="Liberation Sans, sans-serif" textLength="20" lengthAdjust="spacingAndGlyphs">Ps</text>

<!-- word -->
<rect x="523" y="858.6" width="15.2" height="23" fill="#ffffff" stroke="#2b579a" stroke-width="1.6"/>
<path d="M526 863 H536 M526 866.4 H536 M526 869.8 H536 M526 873.2 H536 M526 876.6 H536 M526 880 H536" stroke="#2b579a" stroke-width="1.5" fill="none"/>
<path d="M503.2 857.4 L523.8 853.8 V881 H503.2 Z" fill="#2b579a"/>
<text x="505.6" y="880" font-size="19" font-weight="bold" fill="#ffffff" font-family="Liberation Sans, sans-serif" textLength="16" lengthAdjust="spacingAndGlyphs">W</text>

<!-- snip -->
<rect x="576" y="856.6" width="31.2" height="26" fill="#c6def8" stroke="#0b0b0b" stroke-width="2" stroke-dasharray="2 2"/>

<!-- tray -->
<path d="M1303.8 874.8 L1308.2 868.6 L1312.6 874.8 Z" fill="#ffffff"/>
<path d="M1334 879.5 C1330 879.5 1329.4 874.6 1333 873.6 C1332.6 869 1338.4 867.4 1340.2 870.6 C1342.6 867.4 1347.8 869.4 1346.8 873.4 C1350.6 873.8 1350.4 879.5 1346.6 879.5 Z" fill="#1a6fd0" stroke="#9fd4ff" stroke-width="1.1"/>
<path d="M1339 880.5 C1336 880.5 1335.6 876.6 1338.4 876 C1338.4 872.8 1342.8 872 1344 874.6 C1347 873.6 1348.6 876.6 1347.4 880.5 Z" fill="#1a6fd0" stroke="#9fd4ff" stroke-width="1"/>
<path d="M1364.6 879.8 C1360.6 879.8 1360 874.8 1363.6 873.8 C1363.2 869.2 1369 867.6 1370.8 870.8 C1373.2 867.6 1378.4 869.6 1377.4 873.6 C1381 874 1380.8 879.8 1377.2 879.8 Z" fill="#ffffff"/>
<path d="M1366.6 880 C1366.6 875.6 1371.6 873.6 1374.6 876.2" fill="none" stroke="#0a0c10" stroke-width="1.1"/>
<path d="M1396 866 L1400 868.6 L1396 871.2 L1392 868.6 Z M1404.4 866 L1408.4 868.6 L1404.4 871.2 L1400.4 868.6 Z M1396 872 L1400 874.6 L1396 877.2 L1392 874.6 Z M1400.2 877 L1403.6 879.4 L1400.2 881 L1396.8 879.4 Z" fill="#ffffff"/>
<path d="M1404.6 871.4 L1410 880.5 H1399.4 Z" fill="#f2a830"/>
<rect x="1421.6" y="867.6" width="9.8" height="14" fill="none" stroke="#ffffff" stroke-width="1.8"/><rect x="1424.4" y="865.6" width="4.2" height="2" fill="#ffffff"/>
<rect x="1424" y="870" width="5" height="11" fill="#ffffff" opacity="0.85"/>
<path d="M1433 868.4 V872 M1438 868.4 V872 M1432 872 H1439 V875.4 Q1439 877.4 1436.6 877.4 V881 H1434.4 V877.4 Q1432 877.4 1432 875.4 Z" fill="#ffffff" stroke="#ffffff" stroke-width="1"/>
<g fill="#ffffff"><rect x="1453" y="877" width="2.4" height="4"/><rect x="1456.8" y="874" width="2.4" height="7"/><rect x="1460.6" y="871" width="2.4" height="10"/><rect x="1464.4" y="867.6" width="2.6" height="13.4"/></g>
<!-- show desktop -->
<rect x="1566" y="849.5" width="30" height="31" fill="#1a1d22"/><rect x="1566" y="849.5" width="1" height="31" fill="#4a4f57"/>
<path d="M1567 849.5 H1596 V862 C1584 860 1574 856 1567 851 Z" fill="#3a3f47" opacity="0.7"/>
</g>
</svg>

<!-- texts -->
<span class="t" style="left:679.94px;top:10.00px;font-size:14.5px;color:#b4c7ea;transform:scaleX(1.0342);">Aria Newsletter Mrs. Weber - Word</span>
<span class="t" style="left:20.66px;top:46.00px;font-size:14.8px;color:#ffffff;transform:scaleX(0.9961);">File</span>
<span class="t" style="left:85.44px;top:45.00px;font-size:14.8px;color:#ffffff;transform:scaleX(1.0551);">Home</span>
<span class="t" style="left:155.36px;top:45.00px;font-size:14.8px;color:#ffffff;transform:scaleX(0.9889);">Insert</span>
<span class="t" style="left:220.55px;top:45.00px;font-size:14.8px;color:#ffffff;transform:scaleX(1.0114);">Design</span>
<span class="t" style="left:295.63px;top:45.00px;font-size:14.8px;color:#2b579a;transform:scaleX(0.9909);">Layout</span>
<span class="t" style="left:368.77px;top:45.00px;font-size:14.8px;color:#ffffff;transform:scaleX(0.9590);">References</span>
<span class="t" style="left:469.63px;top:45.00px;font-size:14.8px;color:#ffffff;transform:scaleX(1.0525);">Mailings</span>
<span class="t" style="left:554.76px;top:45.00px;font-size:14.8px;color:#ffffff;transform:scaleX(0.9638);">Review</span>
<span class="t" style="left:631.24px;top:45.00px;font-size:14.8px;color:#ffffff;transform:scaleX(1.0181);">View</span>
<span class="t" style="left:714.36px;top:45.00px;font-size:14.8px;color:#c9d6ec;transform:scaleX(1.0189);">Tell me what you want to do...</span>
<span class="t" style="left:1413.38px;top:45.00px;font-size:14.8px;color:#ffffff;transform:scaleX(0.9708);">Tracy Weber</span>
<span class="t" style="left:1533.72px;top:45.00px;font-size:14.8px;color:#ffffff;transform:scaleX(0.9763);">Share</span>
<span class="t" style="left:1.20px;top:118.00px;font-size:15.0px;color:#444444;transform:scaleX(1.0025);">Margins</span>
<span class="t" style="left:59.54px;top:118.00px;font-size:15.0px;color:#444444;transform:scaleX(1.0331);">Orientation</span>
<span class="t" style="left:147.70px;top:118.00px;font-size:15.0px;color:#444444;transform:scaleX(0.9590);">Size</span>
<span class="t" style="left:189.52px;top:118.00px;font-size:15.0px;color:#444444;transform:scaleX(0.9689);">Columns</span>
<span class="t" style="left:275.61px;top:76.00px;font-size:15.0px;color:#444444;transform:scaleX(0.9375);">Breaks</span>
<span class="t" style="left:275.45px;top:103.00px;font-size:15.0px;color:#444444;transform:scaleX(0.9803);">Line Numbers</span>
<span class="t" style="left:275.32px;top:130.00px;font-size:15.0px;color:#444444;transform:scaleX(1.0172);">Hyphenation</span>
<span class="t" style="left:392.13px;top:77.00px;font-size:15.0px;color:#444444;transform:scaleX(1.0293);">Indent</span>
<span class="t" style="left:418.44px;top:105.00px;font-size:15.0px;color:#444444;transform:scaleX(1.0453);">Left:</span>
<span class="t" style="left:418.52px;top:133.00px;font-size:15.0px;color:#444444;transform:scaleX(1.0204);">Right:</span>
<span class="t" style="left:465.30px;top:105.00px;font-size:15.0px;color:#444444;transform:scaleX(0.9772);">0&quot;</span>
<span class="t" style="left:465.30px;top:133.00px;font-size:15.0px;color:#444444;transform:scaleX(0.9772);">0&quot;</span>
<span class="t" style="left:553.03px;top:77.00px;font-size:15.0px;color:#444444;transform:scaleX(0.9901);">Spacing</span>
<span class="t" style="left:578.15px;top:105.00px;font-size:15.0px;color:#444444;transform:scaleX(1.0091);">Before:</span>
<span class="t" style="left:579.14px;top:133.00px;font-size:15.0px;color:#444444;transform:scaleX(1.0250);">After:</span>
<span class="t" style="left:634.20px;top:105.00px;font-size:15.0px;color:#444444;transform:scaleX(1.0405);">0 pt</span>
<span class="t" style="left:634.20px;top:133.00px;font-size:15.0px;color:#444444;transform:scaleX(1.0405);">0 pt</span>
<span class="t" style="left:732.40px;top:118.00px;font-size:15.0px;color:#ababab;transform:scaleX(1.0018);">Position</span>
<span class="t" style="left:796.80px;top:118.00px;font-size:15.0px;color:#ababab;transform:scaleX(0.9951);">Wrap</span>
<span class="t" style="left:796.53px;top:138.00px;font-size:15.0px;color:#ababab;transform:scaleX(0.9541);">Text</span>
<span class="t" style="left:855.53px;top:118.00px;font-size:15.0px;color:#ababab;transform:scaleX(1.0185);">Bring</span>
<span class="t" style="left:840.23px;top:138.00px;font-size:15.0px;color:#ababab;transform:scaleX(0.9879);">Forward</span>
<span class="t" style="left:930.27px;top:118.00px;font-size:15.0px;color:#ababab;transform:scaleX(0.9705);">Send</span>
<span class="t" style="left:910.27px;top:138.00px;font-size:15.0px;color:#ababab;transform:scaleX(0.9760);">Backward</span>
<span class="t" style="left:987.62px;top:118.00px;font-size:15.0px;color:#333333;transform:scaleX(1.0081);">Selection</span>
<span class="t" style="left:1003.38px;top:138.00px;font-size:15.0px;color:#333333;transform:scaleX(0.9524);">Pane</span>
<span class="t" style="left:1079.73px;top:76.00px;font-size:15.0px;color:#444444;transform:scaleX(1.0556);">Align</span>
<span class="t" style="left:1078.53px;top:102.00px;font-size:15.0px;color:#ababab;transform:scaleX(0.9869);">Group</span>
<span class="t" style="left:1078.81px;top:130.00px;font-size:15.0px;color:#ababab;transform:scaleX(0.9932);">Rotate</span>
<span class="t" style="left:148.57px;top:163.00px;font-size:12.7px;color:#5e5e5e;transform:scaleX(1.0008);">Page Setup</span>
<span class="t" style="left:516.85px;top:163.00px;font-size:12.7px;color:#5e5e5e;transform:scaleX(1.0376);">Paragraph</span>
<span class="t" style="left:912.71px;top:163.00px;font-size:12.7px;color:#5e5e5e;transform:scaleX(1.0304);">Arrange</span>
<span class="t" style="left:3.26px;top:829.00px;font-size:12.8px;color:#666666;transform:scaleX(1.0335);">Page 2 of 2</span>
<span class="t" style="left:87.12px;top:829.00px;font-size:12.8px;color:#666666;transform:scaleX(0.9780);">At: 7.1&quot;</span>
<span class="t" style="left:145.86px;top:829.00px;font-size:12.8px;color:#666666;transform:scaleX(1.0443);">661 words</span>
<span class="t" style="left:1555.07px;top:829.00px;font-size:12.8px;color:#666666;transform:scaleX(0.9884);">120%</span>
<span class="t" style="left:1496.14px;top:856.00px;font-size:14.6px;color:#ffffff;transform:scaleX(0.9598);">1:16 PM</span>
<span class="t" style="left:1489.35px;top:878.00px;font-size:14.6px;color:#ffffff;transform:scaleX(0.9976);">7/31/2018</span>
<span class="t" style="left:698.02px;top:226.00px;font-size:35.5px;color:#fff8f0;transform:scaleX(0.9977);-webkit-text-stroke:0.4px #fff8f0;">Our·Services¶</span>
<span class="t" style="left:1036.15px;top:245.00px;font-size:12.5px;color:#3a1c05;transform:scaleX(1.0262);">Section Break (Continuous)</span>
<span class="t" style="left:332.27px;top:291.00px;font-size:18.2px;color:#111111;transform:scaleX(1.1080);-webkit-text-stroke:0.25px #111;">Acute·Inpatient·and·</span>
<span class="t" style="left:361.20px;top:318.00px;font-size:18.2px;color:#111111;transform:scaleX(1.1455);-webkit-text-stroke:0.25px #111;">Outpatient·Rehabilitation¶</span>
<span class="t" style="left:332.27px;top:345.00px;font-size:18.2px;color:#111111;transform:scaleX(1.1004);-webkit-text-stroke:0.25px #111;">Adult·Disability·Evaluation·</span>
<span class="t" style="left:361.44px;top:372.00px;font-size:18.2px;color:#111111;transform:scaleX(1.0861);-webkit-text-stroke:0.25px #111;">and·Therapy¶</span>
<span class="t" style="left:332.27px;top:398.00px;font-size:18.2px;color:#111111;transform:scaleX(1.1023);-webkit-text-stroke:0.25px #111;">Aquatic·Therapy·for·Adults¶</span>
<span class="t" style="left:331.76px;top:425.00px;font-size:18.2px;color:#111111;transform:scaleX(1.0444);-webkit-text-stroke:0.25px #111;">Balance·and·Dizziness·</span>
<span class="t" style="left:360.33px;top:452.00px;font-size:18.2px;color:#111111;transform:scaleX(1.1453);-webkit-text-stroke:0.25px #111;">Rehabilitation¶</span>
<span class="t" style="left:331.67px;top:479.00px;font-size:18.2px;color:#111111;transform:scaleX(1.0656);-webkit-text-stroke:0.25px #111;">Pediatric·Cerebral·Palsy·</span>
<span class="t" style="left:360.33px;top:506.00px;font-size:18.2px;color:#111111;transform:scaleX(1.1438);-webkit-text-stroke:0.25px #111;">Management¶</span>
<span class="t" style="left:331.59px;top:533.00px;font-size:18.2px;color:#111111;transform:scaleX(1.0882);-webkit-text-stroke:0.25px #111;">Daily·Task·Retraining¶</span>
<span class="t" style="left:331.61px;top:560.00px;font-size:18.2px;color:#111111;transform:scaleX(1.0801);-webkit-text-stroke:0.25px #111;">Dynamic·Posture·Assessment¶</span>
<span class="t" style="left:331.60px;top:587.00px;font-size:18.2px;color:#111111;transform:scaleX(1.0823);-webkit-text-stroke:0.25px #111;">Endurance·and·Strength·</span>
<span class="t" style="left:360.33px;top:614.00px;font-size:18.2px;color:#111111;transform:scaleX(1.1453);-webkit-text-stroke:0.25px #111;">Rehabilitation¶</span>
<span class="t" style="left:331.59px;top:640.00px;font-size:18.2px;color:#111111;transform:scaleX(1.0909);-webkit-text-stroke:0.25px #111;">Ergonomic·Evaluation·and·</span>
<span class="t" style="left:361.27px;top:667.00px;font-size:18.2px;color:#111111;transform:scaleX(1.1242);-webkit-text-stroke:0.25px #111;">Adaptations¶</span>
<span class="t" style="left:331.67px;top:694.00px;font-size:18.2px;color:#111111;transform:scaleX(1.0673);-webkit-text-stroke:0.25px #111;">Fall-Prevention·Exercises·and·</span>
<span class="t" style="left:361.27px;top:721.00px;font-size:18.2px;color:#111111;transform:scaleX(1.1242);-webkit-text-stroke:0.25px #111;">Adaptations¶</span>
<span class="t" style="left:331.53px;top:748.00px;font-size:18.2px;color:#111111;transform:scaleX(1.1062);-webkit-text-stroke:0.25px #111;">Hand·and·Arm·Rehabilitation¶</span>
<span class="t" style="left:331.45px;top:775.00px;font-size:18.2px;color:#111111;transform:scaleX(1.1193);-webkit-text-stroke:0.25px #111;">Home·Adaptations¶</span>
<span class="t" style="left:330.92px;top:802.00px;font-size:18.2px;color:#111111;transform:scaleX(1.1382);-webkit-text-stroke:0.25px #111;">Joint·Mobilization¶</span>
<span class="t" style="left:667.72px;top:291.00px;font-size:18.2px;color:#111111;transform:scaleX(1.1061);-webkit-text-stroke:0.25px #111;">Motor·Vehicle·Skill·</span>
<span class="t" style="left:697.07px;top:318.00px;font-size:18.2px;color:#111111;transform:scaleX(1.0683);-webkit-text-stroke:0.25px #111;">Assessment¶</span>
<span class="t" style="left:667.73px;top:345.00px;font-size:18.2px;color:#111111;transform:scaleX(1.1062);-webkit-text-stroke:0.25px #111;">Neurological·Therapy¶</span>
<span class="t" style="left:667.71px;top:372.00px;font-size:18.2px;color:#111111;transform:scaleX(1.1111);-webkit-text-stroke:0.25px #111;">Neuromuscular·Retraining¶</span>
<span class="t" style="left:667.68px;top:398.00px;font-size:18.2px;color:#111111;transform:scaleX(1.1129);-webkit-text-stroke:0.25px #111;">Pain·Management¶</span>
<span class="t" style="left:667.73px;top:425.00px;font-size:18.2px;color:#111111;transform:scaleX(1.1037);-webkit-text-stroke:0.25px #111;">Pediatric·Disability·</span>
<span class="t" style="left:696.23px;top:452.00px;font-size:18.2px;color:#111111;transform:scaleX(1.1263);-webkit-text-stroke:0.25px #111;">Evaluation¶</span>
<span class="t" style="left:667.81px;top:479.00px;font-size:18.2px;color:#111111;transform:scaleX(1.0776);-webkit-text-stroke:0.25px #111;">Range·of·Motion·Assessment·</span>
<span class="t" style="left:696.84px;top:506.00px;font-size:18.2px;color:#111111;transform:scaleX(1.0861);-webkit-text-stroke:0.25px #111;">and·Therapy¶</span>
<span class="t" style="left:667.81px;top:533.00px;font-size:18.2px;color:#111111;transform:scaleX(1.0912);-webkit-text-stroke:0.25px #111;">Sensorimotor·Skill·</span>
<span class="t" style="left:697.07px;top:560.00px;font-size:18.2px;color:#111111;transform:scaleX(1.0644);-webkit-text-stroke:0.25px #111;">Assessments¶</span>
<span class="t" style="left:667.84px;top:587.00px;font-size:18.2px;color:#111111;transform:scaleX(1.0632);-webkit-text-stroke:0.25px #111;">Social·Skills·Training¶</span>
<span class="t" style="left:667.77px;top:614.00px;font-size:18.2px;color:#111111;transform:scaleX(1.1117);-webkit-text-stroke:0.25px #111;">Spine·Injury·Rehabilitation¶</span>
<span class="t" style="left:667.77px;top:640.00px;font-size:18.2px;color:#111111;transform:scaleX(1.1204);-webkit-text-stroke:0.25px #111;">Sports·Injury·Rehabilitation¶</span>
<span class="t" style="left:667.80px;top:667.00px;font-size:18.2px;color:#111111;transform:scaleX(1.0973);-webkit-text-stroke:0.25px #111;">Sports·Performance·Training¶</span>
<span class="t" style="left:667.84px;top:694.00px;font-size:18.2px;color:#111111;transform:scaleX(1.0829);-webkit-text-stroke:0.25px #111;">Stress·Reduction¶</span>
<span class="t" style="left:668.63px;top:721.00px;font-size:18.2px;color:#111111;transform:scaleX(1.1290);-webkit-text-stroke:0.25px #111;">Work·Injury·Rehabilitation¶</span>
<span class="t" style="left:668.77px;top:748.00px;font-size:18.2px;color:#111111;transform:scaleX(1.0770);-webkit-text-stroke:0.25px #111;">Yoga·for·Managing·Chronic·</span>
<span class="t" style="left:696.33px;top:775.00px;font-size:18.2px;color:#111111;transform:scaleX(1.1023);-webkit-text-stroke:0.25px #111;">Pain¶</span>
<svg style="left:0;top:0" width="1596" height="880" viewBox="0 0 1596 880">
<circle cx="712.8" cy="606.7" r="34.1" fill="rgba(255,255,140,0.08)" stroke="rgba(236,243,48,0.9)" stroke-width="4.7"/>
<path d="M714.6 601.4 V615 M711.6 601 H713.8 M715.4 601 H717.6 M711.6 615.4 H713.8 M715.4 615.4 H717.6" fill="none" stroke="#2a2a2a" stroke-width="1"/>
</svg>

</div></body></html>
